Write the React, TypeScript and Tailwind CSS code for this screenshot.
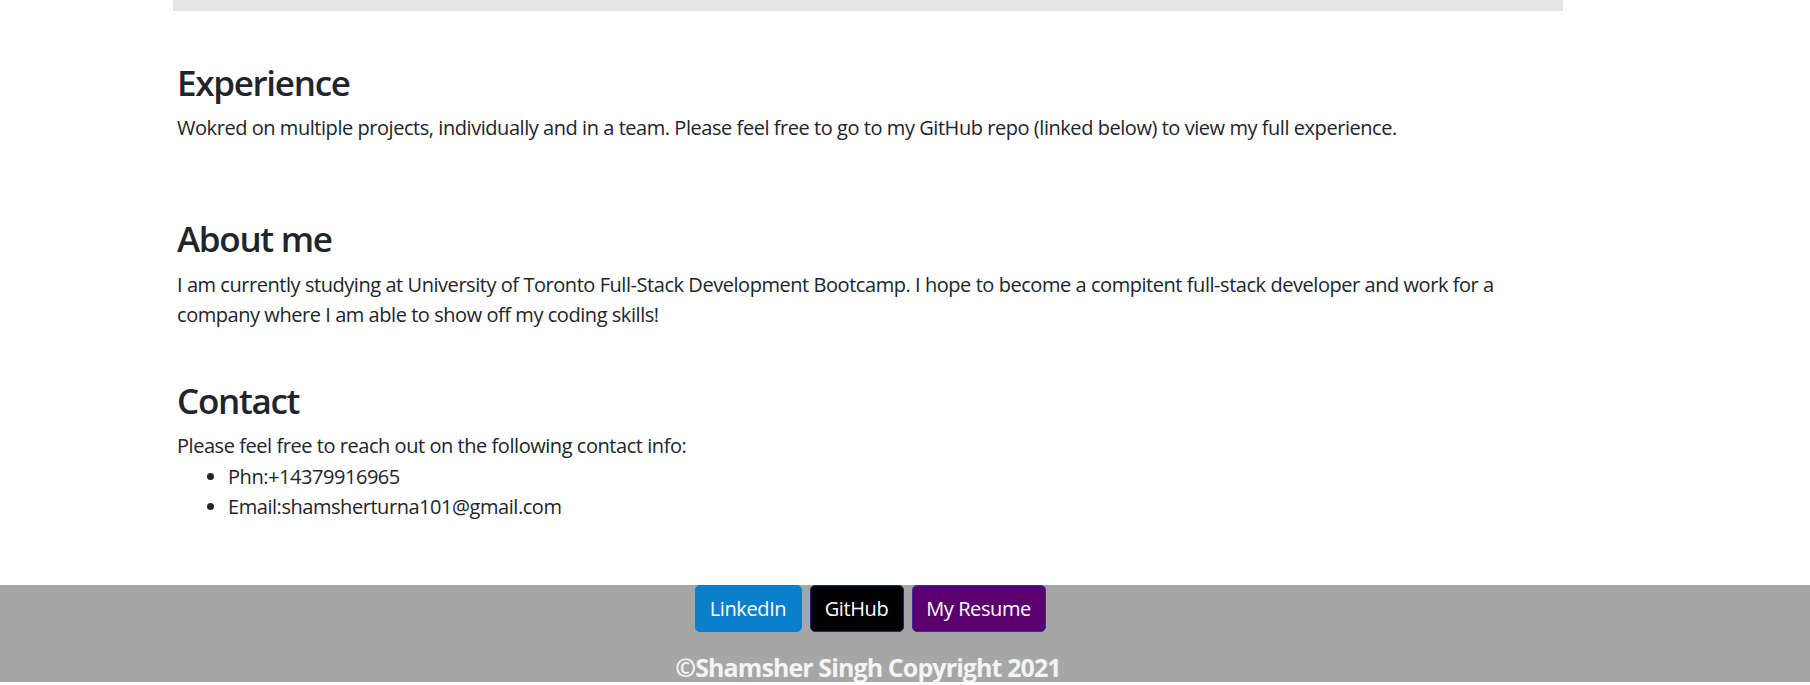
export default function App() {
  return (
    <div className="bg-white text-[#212529] font-['Open_Sans','Noto_Sans',sans-serif] text-[20px] leading-[30px] tracking-[-0.45px]">
      {/* top banner strip */}
      <div className="w-[1736px]">
        <div className="mx-auto w-[1390px] h-[11px] bg-[#e4e4e4]" />
      </div>

      <main className="w-[1736px]">
        <div className="mx-auto w-[1390px] px-1">
          <section className="pt-[51px]">
            <h3 className="text-[35px] leading-[42px] font-semibold tracking-[-1.3px] mb-[9px]">Experience</h3>
            <p>
              Wokred on multiple projects, individually and in a team. Please feel free to go to my GitHub repo (linked
              below) to view my full experience.
            </p>
          </section>

          <section className="pt-[75px]">
            <h3 className="text-[35px] leading-[42px] font-semibold tracking-[-1.3px] mb-[10px]">About me</h3>
            <p>
              I am currently studying at University of Toronto Full-Stack Development Bootcamp. I hope to become a
              compitent full-stack developer and work for a company where I am able to show off my coding skills!
            </p>
          </section>

          <section className="pt-[50px] pb-[63px]">
            <h3 className="text-[35px] leading-[42px] font-semibold tracking-[-1.3px] mb-[9px]">Contact</h3>
            <p>Please feel free to reach out on the following contact info:</p>
            <ul className="list-disc pl-[51px] mt-px">
              <li>Phn:+14379916965</li>
              <li>Email:shamsherturna101@gmail.com</li>
            </ul>
          </section>
        </div>
      </main>

      <footer className="bg-[#a6a6a6] h-[97px]">
        <div className="w-[1736px] flex flex-col items-center">
          <div className="flex gap-2 pl-1">
            <FooterButton label="LinkedIn" className="w-[107px] bg-[#0a80cc] border-[#0a80cc]" />
            <FooterButton label="GitHub" className="w-[94px] bg-black border-[#1c2a6b]" />
            <FooterButton label="My Resume" className="w-[134px] bg-[#5a006e] border-[#3a2ab0]" />
          </div>
          <h5 className="mt-[20px] text-[25px] leading-[30px] font-bold tracking-[-0.9px] text-[#f4f4f4]">
            ©Shamsher Singh Copyright 2021
          </h5>
        </div>
      </footer>
    </div>
  );
}

function FooterButton({ label, className }: { label: string; className: string }) {
  return (
    <button
      className={`h-[47px] rounded-[5px] border text-white text-[20px] leading-[30px] tracking-[-0.4px] flex items-center justify-center ${className}`}
    >
      {label}
    </button>
  );
}
